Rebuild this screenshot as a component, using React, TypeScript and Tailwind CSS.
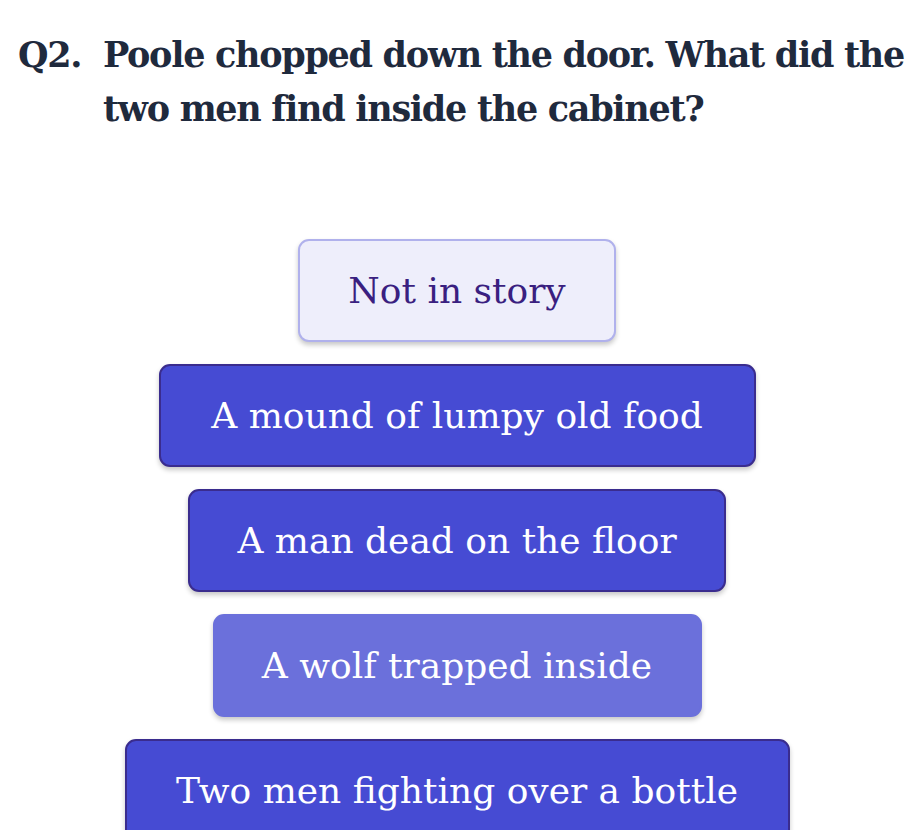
import React from "react";

type Choice = {
  label: string;
  width: string;
  tone: "plain" | "picked" | "soft";
};

const choices: Choice[] = [
  { label: "Not in story", width: "w-[318px]", tone: "plain" },
  { label: "A mound of lumpy old food", width: "w-[597px]", tone: "picked" },
  { label: "A man dead on the floor", width: "w-[538px]", tone: "picked" },
  { label: "A wolf trapped inside", width: "w-[489px]", tone: "soft" },
  { label: "Two men fighting over a bottle", width: "w-[665px]", tone: "picked" },
];

const toneClass = {
  plain: "bg-[#eeeefb] border-2 border-[#b0b1ec] text-[#3a1f80]",
  picked: "bg-[#464bd3] border-2 border-[#3a2c8e] text-white",
  soft: "bg-[#6b70db] border-2 border-[#6b70db] text-white",
};

export default function App() {
  return (
    <div
      className="min-h-screen bg-white w-[914px]"
      style={{ fontFamily: '"DejaVu Serif", "Liberation Serif", serif' }}
    >
      <h1 className="flex pt-[28px] pl-[18px] text-[35px] leading-[54px] font-bold text-[#1f2a3d] tracking-[-1.3px] whitespace-nowrap">
        <span className="w-[85px] shrink-0">Q2.</span>
        <span>
          Poole chopped down the door. What did the
          <br />
          two men find inside the cabinet?
        </span>
      </h1>

      <div className="flex flex-col items-center gap-[22px] pt-[103px]">
        {choices.map((c, i) => (
          <button
            key={i}
            className={`${c.width} ${toneClass[c.tone]} h-[103px] shrink-0 rounded-[11px] shadow-[0_3px_5px_rgba(0,0,0,0.22)] text-[36px] flex items-center justify-center`}
          >
            {c.label}
          </button>
        ))}
      </div>
    </div>
  );
}
